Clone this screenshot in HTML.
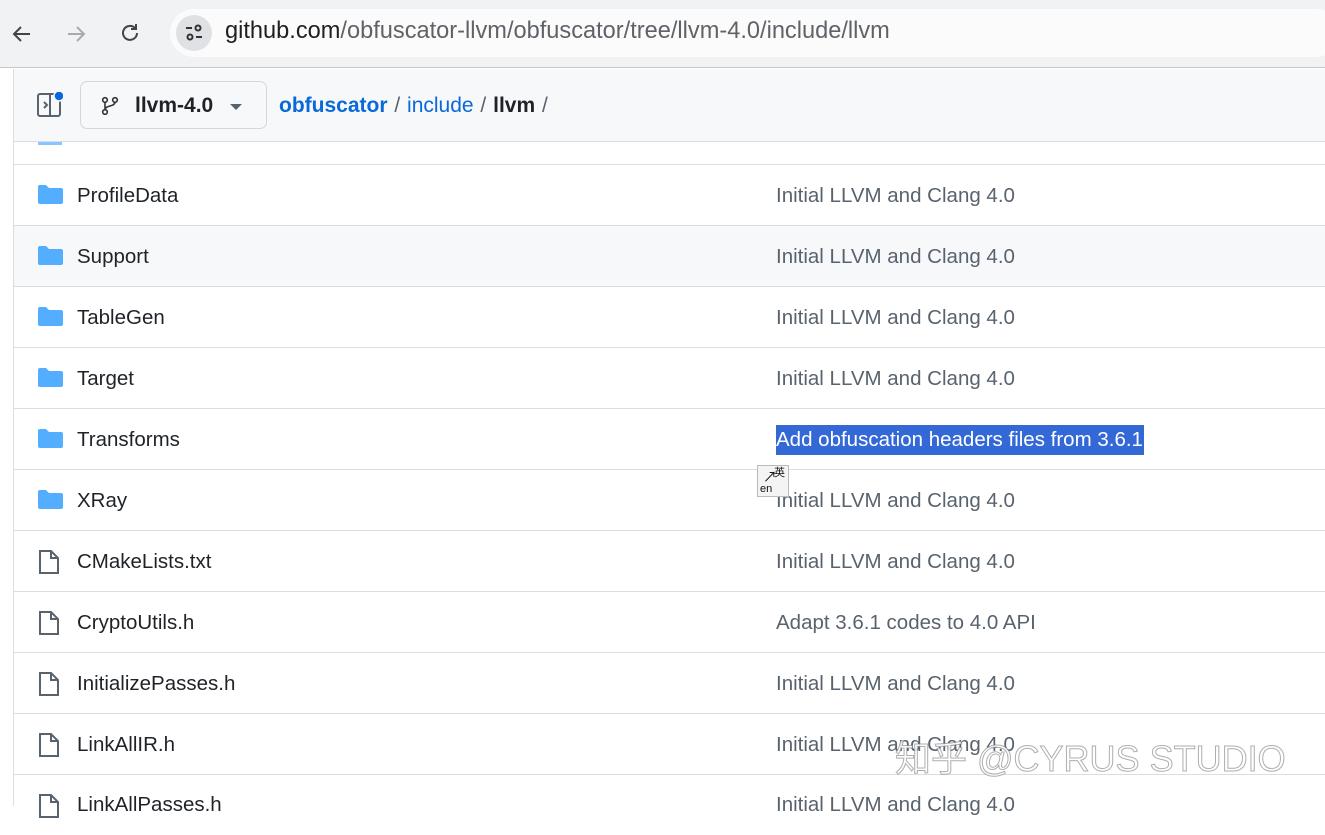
<!DOCTYPE html>
<html><head><meta charset="utf-8"><style>
*{margin:0;padding:0;box-sizing:border-box}
body{width:1325px;height:806px;overflow:hidden;background:#fff;font-family:"Liberation Sans","Noto Sans CJK SC",sans-serif;position:relative}
.top{position:absolute;left:0;top:0;width:1325px;height:68px;background:#f0f2f4;border-bottom:1px solid #c8c8c8}
.pill{position:absolute;left:170px;top:9px;width:1170px;height:48px;border-radius:24px;background:#fbfbfb}
.url{position:absolute;left:225px;top:18px;font-size:23.6px;color:#5f6368}
.url b{font-weight:normal;color:#1f1f1f}
.hdr{position:absolute;left:13px;top:69px;width:1312px;height:73px;background:#f6f8fa;border-bottom:1px solid #d8dee4}
.lb{position:absolute;left:13px;top:69px;width:1px;height:737px;background:#d8dee4}
.row{position:absolute;left:14px;width:1311px;height:61px;border-top:1px solid #d8dee4}
.row .n{position:absolute;left:63px;top:19px;font-size:20.5px;color:#1f2328}
.row .m{position:absolute;left:762px;top:19px;font-size:20.5px;color:#59636e}
.row svg{position:absolute;left:24px;top:19px}
</style></head><body>
<div class="top">
<svg style="position:absolute;left:10px;top:22px" width="24" height="24" viewBox="0 0 24 24"><path d="M20 12H5M11 5l-7 7 7 7" fill="none" stroke="#444" stroke-width="2"/></svg>
<svg style="position:absolute;left:64px;top:22px" width="24" height="24" viewBox="0 0 24 24"><path d="M4 12h15M13 5l7 7-7 7" fill="none" stroke="#aaa" stroke-width="2"/></svg>
<svg style="position:absolute;left:118px;top:21px" width="24" height="24" viewBox="0 0 24 24"><path d="M19 12a7 7 0 1 1-2-5" fill="none" stroke="#444" stroke-width="2"/><path d="M18 3v5h-5" fill="none" stroke="#444" stroke-width="2"/></svg>
<div class="pill"></div>
<div style="position:absolute;left:176px;top:15px;width:36px;height:36px;border-radius:18px;background:#dfe1e4"></div>
<svg style="position:absolute;left:184px;top:23px" width="20" height="20" viewBox="0 0 20 20"><path d="M2 5h6M12 14h6" stroke="#333" stroke-width="2"/><circle cx="14" cy="5" r="2.5" fill="none" stroke="#333" stroke-width="2"/><circle cx="6" cy="14" r="2.5" fill="none" stroke="#333" stroke-width="2"/></svg>
<div class="url"><b>github.com</b>/obfuscator-llvm/obfuscator/tree/llvm-4.0/include/llvm</div>
</div>
<div class="hdr">
<svg style="position:absolute;left:24px;top:23px" width="26" height="26" viewBox="0 0 26 26"><rect x="1" y="2" width="22" height="22" rx="2" fill="none" stroke="#59636e" stroke-width="2"/><path d="M13 2v22M7 10l3 3-3 3" fill="none" stroke="#59636e" stroke-width="2"/><circle cx="22" cy="4" r="5" fill="#0969da" stroke="#f6f8fa" stroke-width="1.5"/></svg>
<div style="position:absolute;left:67px;top:12px;width:187px;height:48px;border:1px solid #d1d9e0;border-radius:7px;background:#f6f8fa"></div>
<svg style="position:absolute;left:87px;top:27px" width="20" height="20" viewBox="0 0 20 20"><circle cx="5" cy="4" r="2.3" fill="none" stroke="#333" stroke-width="1.6"/><circle cx="5" cy="16" r="2.3" fill="none" stroke="#333" stroke-width="1.6"/><circle cx="15" cy="4" r="2.3" fill="none" stroke="#333" stroke-width="1.6"/><path d="M5 6v8M15 6c0 5-10 3-10 8" fill="none" stroke="#333" stroke-width="1.6"/></svg>
<div style="position:absolute;left:122px;top:25px;font-size:21px;color:#1f2328;font-weight:bold">llvm-4.0</div>
<div style="position:absolute;left:217px;top:35px;border-left:6px solid transparent;border-right:6px solid transparent;border-top:6px solid #59636e"></div>
<div style="position:absolute;left:266px;top:25px;font-size:21px;color:#59636e;word-spacing:1px"><span style="color:#0969da;font-weight:bold">obfuscator</span> / <span style="color:#0969da">include</span> / <b style="color:#1f2328">llvm</b> /</div>
</div>
<div class="lb"></div>
<div style="position:absolute;left:38px;top:142px;width:24px;height:3px;background:#54aeff;opacity:.7"></div>
<div class="row" style="top:164px"><svg width="25" height="20" viewBox="0 0 25 20"><path d="M0 3a2 2 0 0 1 2-2h6l3 3h12a2 2 0 0 1 2 2v12a2 2 0 0 1-2 2H2a2 2 0 0 1-2-2z" fill="#54aeff"/></svg><div class="n">ProfileData</div><div class="m">Initial LLVM and Clang 4.0</div></div>
<div class="row" style="top:225px;background:#f6f8fa"><svg width="25" height="20" viewBox="0 0 25 20"><path d="M0 3a2 2 0 0 1 2-2h6l3 3h12a2 2 0 0 1 2 2v12a2 2 0 0 1-2 2H2a2 2 0 0 1-2-2z" fill="#54aeff"/></svg><div class="n">Support</div><div class="m">Initial LLVM and Clang 4.0</div></div>
<div class="row" style="top:286px"><svg width="25" height="20" viewBox="0 0 25 20"><path d="M0 3a2 2 0 0 1 2-2h6l3 3h12a2 2 0 0 1 2 2v12a2 2 0 0 1-2 2H2a2 2 0 0 1-2-2z" fill="#54aeff"/></svg><div class="n">TableGen</div><div class="m">Initial LLVM and Clang 4.0</div></div>
<div class="row" style="top:347px"><svg width="25" height="20" viewBox="0 0 25 20"><path d="M0 3a2 2 0 0 1 2-2h6l3 3h12a2 2 0 0 1 2 2v12a2 2 0 0 1-2 2H2a2 2 0 0 1-2-2z" fill="#54aeff"/></svg><div class="n">Target</div><div class="m">Initial LLVM and Clang 4.0</div></div>
<div class="row" style="top:408px"><svg width="25" height="20" viewBox="0 0 25 20"><path d="M0 3a2 2 0 0 1 2-2h6l3 3h12a2 2 0 0 1 2 2v12a2 2 0 0 1-2 2H2a2 2 0 0 1-2-2z" fill="#54aeff"/></svg><div class="n">Transforms</div><div class="m" style="background:#3468d6;color:#fff;top:16px;padding:3px 1px 0 0;height:30px">Add obfuscation headers files from 3.6.1</div></div>
<div class="row" style="top:469px"><svg width="25" height="20" viewBox="0 0 25 20"><path d="M0 3a2 2 0 0 1 2-2h6l3 3h12a2 2 0 0 1 2 2v12a2 2 0 0 1-2 2H2a2 2 0 0 1-2-2z" fill="#54aeff"/></svg><div class="n">XRay</div><div class="m">Initial LLVM and Clang 4.0</div></div>
<div class="row" style="top:530px"><svg width="22" height="24" viewBox="0 0 22 24"><path d="M2 1h11l7 7v15H2z M13 1v7h7" fill="none" stroke="#59636e" stroke-width="2"/></svg><div class="n">CMakeLists.txt</div><div class="m">Initial LLVM and Clang 4.0</div></div>
<div class="row" style="top:591px"><svg width="22" height="24" viewBox="0 0 22 24"><path d="M2 1h11l7 7v15H2z M13 1v7h7" fill="none" stroke="#59636e" stroke-width="2"/></svg><div class="n">CryptoUtils.h</div><div class="m">Adapt 3.6.1 codes to 4.0 API</div></div>
<div class="row" style="top:652px"><svg width="22" height="24" viewBox="0 0 22 24"><path d="M2 1h11l7 7v15H2z M13 1v7h7" fill="none" stroke="#59636e" stroke-width="2"/></svg><div class="n">InitializePasses.h</div><div class="m">Initial LLVM and Clang 4.0</div></div>
<div class="row" style="top:713px"><svg width="22" height="24" viewBox="0 0 22 24"><path d="M2 1h11l7 7v15H2z M13 1v7h7" fill="none" stroke="#59636e" stroke-width="2"/></svg><div class="n">LinkAllIR.h</div><div class="m">Initial LLVM and Clang 4.0</div></div>
<div class="row" style="top:774px"><svg width="22" height="24" viewBox="0 0 22 24"><path d="M2 1h11l7 7v15H2z M13 1v7h7" fill="none" stroke="#59636e" stroke-width="2"/></svg><div class="n" style="top:18px">LinkAllPasses.h</div><div class="m" style="top:18px">Initial LLVM and Clang 4.0</div></div>
<div style="position:absolute;left:757px;top:465px;width:32px;height:32px;border:1px solid #bbb;background:#f4f4f4;font-size:11px;line-height:11px;color:#111"><span style="position:absolute;left:16px;top:2px">英</span><span style="position:absolute;left:2px;top:18px">en</span><span style="position:absolute;left:5px;top:6px;font-size:14px">↗</span></div>
<div style="position:absolute;left:895px;top:730px;font-size:36px;color:rgba(255,255,255,.85);-webkit-text-stroke:1px rgba(120,120,120,.6);font-family:'Liberation Sans','Noto Sans CJK SC',sans-serif">知乎 @CYRUS STUDIO</div>
</body></html>
